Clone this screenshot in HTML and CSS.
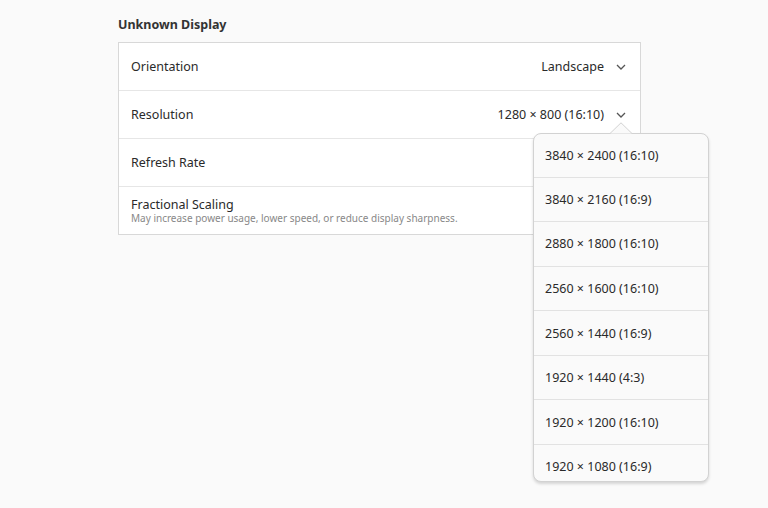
FILE: index.html
```html
<!DOCTYPE html>
<html>
<head>
<meta charset="utf-8">
<link rel="stylesheet" href="styles.css">
</head>
<body>
<div class="page">
  <h2 class="title">Unknown Display</h2>
  <div class="list">
    <div class="row">
      <span class="label">Orientation</span>
      <span class="value">Landscape<svg class="chev" width="10" height="6" viewBox="0 0 10 6"><path d="M1 1 L5 5 L9 1" fill="none" stroke="#555" stroke-width="1.3"/></svg></span>
    </div>
    <div class="row">
      <span class="label">Resolution</span>
      <span class="value">1280 × 800 (16:10)<svg class="chev" width="10" height="6" viewBox="0 0 10 6"><path d="M1 1 L5 5 L9 1" fill="none" stroke="#555" stroke-width="1.3"/></svg></span>
    </div>
    <div class="row">
      <span class="label">Refresh Rate</span>
    </div>
    <div class="row two">
      <div class="labels">
        <span class="label">Fractional Scaling</span>
        <span class="sub">May increase power usage, lower speed, or reduce display sharpness.</span>
      </div>
    </div>
  </div>
  <div class="popover">
    <svg class="arrow" width="22" height="12" viewBox="0 0 22 12"><path d="M0 11.5 L11 0.8 L22 11.5" fill="#fafafa" stroke="#d2d2d2" stroke-width="1"/></svg>
    <div class="menu">
      <div class="item">3840 × 2400 (16:10)</div>
      <div class="item">3840 × 2160 (16:9)</div>
      <div class="item">2880 × 1800 (16:10)</div>
      <div class="item">2560 × 1600 (16:10)</div>
      <div class="item">2560 × 1440 (16:9)</div>
      <div class="item">1920 × 1440 (4:3)</div>
      <div class="item">1920 × 1200 (16:10)</div>
      <div class="item">1920 × 1080 (16:9)</div>
    </div>
  </div>
</div>
</body>
</html>
```
FILE: styles.css
```css
html, body {
  margin: 0;
  padding: 0;
  background: #fafafa;
  font-family: "Noto Sans", "DejaVu Sans", sans-serif;
  color: #2a2a2a;
  -webkit-font-smoothing: antialiased;
}
.page {
  position: relative;
  width: 768px;
  height: 508px;
  overflow: hidden;
}
.title {
  margin: 0;
  padding: 16px 0 0 118px;
  font-size: 12.5px;
  font-weight: bold;
  line-height: 18px;
  color: #333;
}
.list {
  margin: 8px 0 0 118px;
  width: 521px;
  background: #fff;
  border: 1px solid #d8d8d8;
}
.row {
  height: 47px;
  display: flex;
  align-items: center;
  justify-content: space-between;
  padding: 0 12px;
  border-top: 1px solid #e6e6e6;
}
.row:first-child {
  border-top: none;
}
.label {
  font-size: 12.5px;
  color: #2a2a2a;
}
.value {
  font-size: 12.5px;
  display: flex;
  align-items: center;
  color: #2a2a2a;
}
.chev {
  margin-left: 12px;
  margin-right: 2px;
}
.labels {
  display: flex;
  flex-direction: column;
}
.labels .label {
  line-height: 15px;
}
.sub {
  font-size: 10px;
  color: #888;
  line-height: 12px;
}
.popover {
  position: absolute;
  left: 533px;
  top: 122px;
  width: 176px;
}
.arrow {
  position: absolute;
  left: 77px;
  top: 0;
  z-index: 2;
}
.menu {
  margin-top: 11px;
  height: 349px;
  box-sizing: border-box;
  background: #fafafa;
  border: 1px solid #d2d2d2;
  border-radius: 8px;
  box-shadow: 0 2px 3px rgba(0,0,0,0.15);
  overflow: hidden;
}
.item {
  height: 43.57px;
  display: flex;
  align-items: center;
  padding-left: 11px;
  font-size: 12.5px;
  color: #2a2a2a;
  border-top: 1px solid #e2e2e2;
}
.item:first-child {
  border-top: none;
  height: 42.57px;
}
```
